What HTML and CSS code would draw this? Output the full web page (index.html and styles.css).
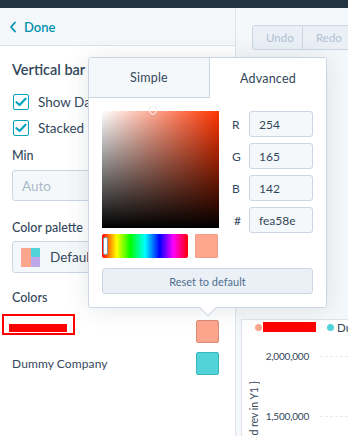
FILE: index.html
```html
<!DOCTYPE html>
<html>
<head>
<meta charset="utf-8">
<link rel="stylesheet" href="styles.css">
</head>
<body>
<div class="topbar"></div>
<div class="main">
  <aside class="panel">
    <div class="panel-head">
      <svg class="chev" width="8" height="12" viewBox="0 0 8 12"><path d="M6 1.5 L2 6 L6 10.5" fill="none" stroke="#0091ae" stroke-width="1.8" stroke-linecap="round" stroke-linejoin="round"/></svg>
      <span class="done">Done</span>
    </div>
    <div class="panel-body">
      <h2 class="title">Vertical bar chart options</h2>
      <label class="check"><span class="box"><svg width="12" height="10" viewBox="0 0 12 10"><path d="M1.5 5.2 L4.6 8 L10.5 1.8" fill="none" stroke="#00a4bd" stroke-width="2.2" stroke-linecap="round" stroke-linejoin="round"/></svg></span>Show Data labels</label>
      <label class="check second"><span class="box"><svg width="12" height="10" viewBox="0 0 12 10"><path d="M1.5 5.2 L4.6 8 L10.5 1.8" fill="none" stroke="#00a4bd" stroke-width="2.2" stroke-linecap="round" stroke-linejoin="round"/></svg></span>Stacked</label>
      <div class="label min-label">Min</div>
      <div class="input">Auto</div>
      <div class="label palette-label">Color palette</div>
      <div class="select">
        <span class="pal"><span class="pal-a"></span><span class="pal-b"></span><span class="pal-c"></span></span>
        <span class="select-text">Default</span>
      </div>
      <div class="label colors-label">Colors</div>
      <div class="color-row first">
        <span class="redact"><span class="redact-bar"></span></span>
        <span class="swatch salmon"></span>
      </div>
      <div class="color-row">
        <span class="row-name">Dummy Company</span>
        <span class="swatch teal"></span>
      </div>
    </div>
  </aside>
  <section class="canvas">
    <div class="toolbar">
      <span class="tbtn">Undo</span><span class="tbtn">Redo</span>
    </div>
    <div class="card">
      <div class="legend">
        <span class="dot dot-salmon"></span><span class="legend-redact"></span>
        <span class="dot dot-teal"></span><span class="legend-text">Dummy Company</span>
      </div>
      <div class="axis-title">{ Closed rev in Y1 }</div>
      <div class="tick first-tick"><span class="tick-label">2,000,000</span><span class="grid-line"></span></div>
      <div class="tick"><span class="tick-label">1,500,000</span><span class="grid-line"></span></div>
    </div>
  </section>
</div>

<div class="popover">
  <div class="tabs">
    <div class="tab inactive">Simple</div>
    <div class="tab active">Advanced</div>
  </div>
  <div class="picker">
    <div class="picker-top">
      <div class="picker-left">
        <div class="sv"><span class="sv-cursor"></span></div>
        <div class="hue-row">
          <div class="hue"><span class="hue-handle"></span></div>
          <div class="preview"></div>
        </div>
      </div>
      <div class="fields">
        <div class="field"><span class="flabel">R</span><span class="finput">254</span></div>
        <div class="field"><span class="flabel">G</span><span class="finput">165</span></div>
        <div class="field"><span class="flabel">B</span><span class="finput">142</span></div>
        <div class="field"><span class="flabel hash">#</span><span class="finput">fea58e</span></div>
      </div>
    </div>
    <div class="reset">Reset to default</div>
  </div>
  <span class="arrow"></span>
</div>
</body>
</html>
```
FILE: styles.css
```css
* { box-sizing: border-box; }
html, body {
  margin: 0;
  padding: 0;
  width: 348px;
  height: 436px;
  overflow: hidden;
}
body {
  font-family: Lato, "Open Sans", sans-serif;
  color: #33475b;
  background: #f5f8fa;
  position: relative;
}
.topbar {
  height: 8px;
  background: #243342;
}
.main {
  display: flex;
  height: 428px;
}
.panel {
  width: 236px;
  flex: none;
  background: #fff;
  border-right: 1px solid #dfe3eb;
}
.panel-head {
  height: 38px;
  background: #f5f8fa;
  border-bottom: 1px solid #dfe3eb;
  display: flex;
  align-items: center;
  padding-left: 9px;
  padding-top: 1px;
}
.chev { margin-right: 7px; }
.done {
  color: #0091ae;
  font-size: 13px;
  font-weight: 600;
}
.panel-body {
  padding: 14px 16px 0 12px;
  display: flex;
  flex-direction: column;
}
.title {
  margin: 0;
  font-size: 14.5px;
  line-height: 20px;
  font-weight: 600;
  white-space: nowrap;
}
.check {
  display: flex;
  align-items: center;
  height: 16px;
  font-size: 13.5px;
  margin-top: 14px;
  margin-left: 1px;
  white-space: nowrap;
}
.check.second { margin-top: 10px; }
.box {
  width: 16px;
  height: 16px;
  border: 1.5px solid #00a4bd;
  border-radius: 2px;
  background: #fff;
  display: flex;
  align-items: center;
  justify-content: center;
  margin-right: 9px;
  flex: none;
}
.label {
  font-size: 12.5px;
  line-height: 16px;
  font-weight: 500;
}
.min-label { margin-top: 12px; }
.input {
  margin-top: 6px;
  height: 31px;
  background: #f5f8fa;
  border: 1px solid #cbd6e2;
  border-radius: 3px;
  font-size: 13.5px;
  color: #a9b8c8;
  display: flex;
  align-items: center;
  padding-left: 9px;
}
.palette-label { margin-top: 19px; }
.select {
  margin-top: 5px;
  height: 32px;
  background: #f5f8fa;
  border: 1px solid #cbd6e2;
  border-radius: 3px;
  display: flex;
  align-items: center;
  padding-left: 8px;
  font-size: 13.5px;
}
.pal {
  width: 19px;
  height: 19px;
  display: grid;
  grid-template-columns: 1fr 1fr;
  grid-template-rows: 1fr 1fr;
  margin-right: 10px;
}
.pal-a { background: #fea58e; grid-row: 1 / 3; }
.pal-b { background: #51d3d9; }
.pal-c { background: #bda9ea; }
.colors-label { margin-top: 17px; }
.color-row {
  display: flex;
  align-items: center;
  justify-content: space-between;
  height: 23px;
  margin-top: 9px;
}
.color-row.first { margin-top: 14px; }
.redact {
  align-self: flex-start;
  margin: -6px 0 0 -10px;
  width: 73px;
  height: 21px;
  border: 2px solid #ff0000;
  background: #fff;
  padding: 8px 0 0 5px;
}
.redact-bar {
  display: block;
  width: 58px;
  height: 8px;
  background: #ff0000;
}
.row-name {
  font-size: 12px;
  letter-spacing: 0.1px;
}
.swatch {
  width: 23px;
  height: 23px;
  border-radius: 2px;
}
.salmon { background: #fea58e; border: 1px solid #dc8b77; }
.teal { background: #51d3d9; border: 1px solid #3bb5bb; }

.canvas {
  flex: 1;
  display: flex;
  flex-direction: column;
  min-width: 0;
}
.toolbar {
  display: flex;
  padding: 17px 0 0 16px;
}
.tbtn {
  height: 25px;
  padding: 0 13px;
  border: 1px solid #cbd6e2;
  background: #eaf0f6;
  color: #b0c1d4;
  font-size: 11.5px;
  display: flex;
  align-items: center;
  flex: none;
}
.tbtn:first-child { border-radius: 3px 0 0 3px; width: 51px; }
.tbtn + .tbtn { border-left: none; }
.card {
  position: relative;
  margin: 269px 0 0 5px;
  background: #fff;
  border: 1px solid #dfe3eb;
  border-right: none;
  border-bottom: none;
  flex: 1;
  overflow: hidden;
}
.legend {
  display: flex;
  align-items: center;
  height: 10px;
  margin: 2px 0 0 13px;
  white-space: nowrap;
}
.dot {
  width: 7px;
  height: 7px;
  border-radius: 50%;
  flex: none;
}
.dot-salmon { background: #fea58e; }
.dot-teal { background: #51d3d9; margin-left: 11px; margin-right: 3px; }
.legend-redact {
  width: 53px;
  height: 10px;
  background: #ff0000;
  margin-left: 1px;
  flex: none;
}
.legend-text { font-size: 11.5px; }
.axis-title {
  position: absolute;
  left: 6px;
  top: 61px;
  writing-mode: vertical-rl;
  transform: rotate(180deg);
  font-size: 10.5px;
  white-space: nowrap;
  color: #33475b;
}
.tick {
  display: flex;
  align-items: center;
  height: 14px;
}
.tick + .tick { margin-top: 46px; }
.tick.first-tick { margin-top: 17px; }
.tick-label {
  width: 67px;
  text-align: right;
  font-size: 10px;
  letter-spacing: -0.2px;
  flex: none;
}
.grid-line {
  flex: 1;
  margin-left: 11px;
  border-top: 1px dashed #e5ebf1;
}

.popover {
  position: absolute;
  left: 88px;
  top: 57px;
  width: 239px;
  background: #fff;
  border: 1px solid #cbd6e2;
  border-radius: 3px;
  box-shadow: 0 1px 24px rgba(45, 62, 80, 0.12);
}
.tabs {
  display: flex;
  height: 40px;
}
.tab {
  display: flex;
  align-items: center;
  justify-content: center;
  font-size: 12.5px;
  letter-spacing: 0.2px;
}
.tab.inactive {
  width: 121px;
  background: #f5f8fa;
  border-right: 1px solid #cbd6e2;
  border-bottom: 1px solid #cbd6e2;
  border-top-left-radius: 3px;
}
.tab.active {
  flex: 1;
}
.picker {
  padding: 13px 13px 13px 13px;
}
.picker-top {
  display: flex;
}
.picker-left {
  width: 117px;
  flex: none;
}
.sv {
  position: relative;
  width: 117px;
  height: 117px;
  background:
    linear-gradient(to top, #000, rgba(0,0,0,0)),
    linear-gradient(to right, #fff, #ff3400);
}
.sv-cursor {
  position: absolute;
  left: 47px;
  top: -4px;
  width: 8px;
  height: 8px;
  border: 1px solid #fff;
  border-radius: 50%;
  box-shadow: 0 0 1px rgba(0,0,0,0.4);
}
.hue-row {
  display: flex;
  margin-top: 6px;
}
.hue {
  position: relative;
  width: 86px;
  height: 24px;
  border-radius: 2px;
  background: linear-gradient(to right, #f00 0%, #ff0 17%, #0f0 33%, #0ff 50%, #00f 67%, #f0f 83%, #f00 100%);
}
.hue-handle {
  position: absolute;
  left: 1px;
  top: 3px;
  width: 5px;
  height: 18px;
  background: #fff;
  border: 1px solid #7c98b6;
  border-radius: 2px;
}
.preview {
  width: 23px;
  height: 24px;
  margin-left: 7px;
  background: #fea58e;
  border: 1px solid #f0a08c;
  border-radius: 1px;
}
.fields {
  flex: 1;
  display: flex;
  flex-direction: column;
  gap: 6px;
  padding-left: 13px;
}
.field {
  display: flex;
  align-items: center;
  height: 26px;
}
.flabel {
  width: 17px;
  font-size: 12px;
  color: #33475b;
}
.flabel.hash { padding-left: 2px; }
.finput {
  width: 64px;
  height: 26px;
  background: #f5f8fa;
  border: 1px solid #cbd6e2;
  border-radius: 3px;
  font-size: 12px;
  display: flex;
  align-items: center;
  padding-left: 9px;
}
.reset {
  margin-top: 10px;
  height: 26px;
  background: #eaf0f6;
  border: 1px solid #cbd6e2;
  border-radius: 3px;
  font-size: 11px;
  color: #516f90;
  display: flex;
  align-items: center;
  justify-content: center;
}
.arrow {
  position: absolute;
  left: 113px;
  bottom: -7px;
  width: 12px;
  height: 12px;
  background: #fff;
  border-right: 1px solid #cbd6e2;
  border-bottom: 1px solid #cbd6e2;
  transform: rotate(45deg);
}
```
